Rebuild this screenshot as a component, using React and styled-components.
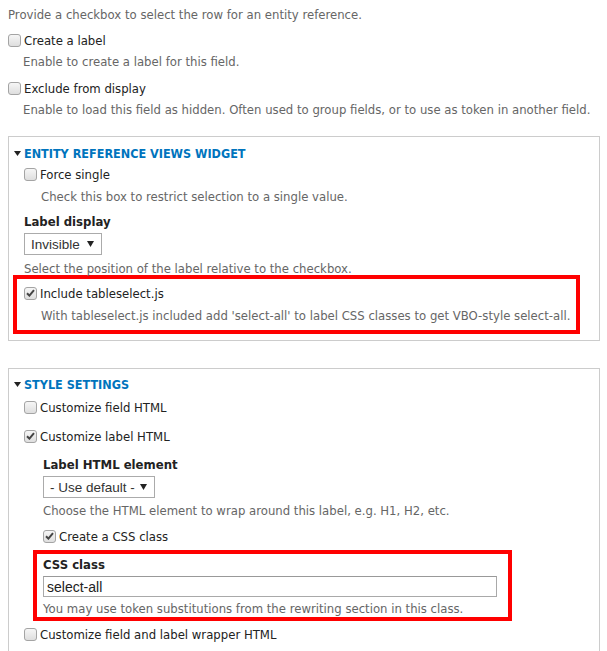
import React from 'react';
import styled, { createGlobalStyle } from 'styled-components';

const GlobalStyle = createGlobalStyle`
  html, body {
    margin: 0;
    padding: 0;
    background: #fff;
  }
  body {
    font-family: "DejaVu Sans", "Noto Sans", sans-serif;
    font-size: 13px;
    color: #222;
  }
`;

const Page = styled.div`
  padding: 7px 7px 0 8px;
`;

const Description = styled.div`
  font-size: 11.7px;
  line-height: ${(p) => p.$lh || 16}px;
  color: #666;
  margin-top: ${(p) => p.$mt || 0}px;
  padding-left: ${(p) => p.$indent || 0}px;
  white-space: nowrap;
`;

const Item = styled.div`
  margin-top: ${(p) => p.$mt || 0}px;
  padding-left: ${(p) => p.$indent || 0}px;
`;

const CheckRow = styled.label`
  display: flex;
  align-items: center;
  gap: 3px;
  height: 20px;
  font-family: "DejaVu Sans Condensed", "DejaVu Sans", sans-serif;
  font-size: 13px;
  color: #222;
  white-space: nowrap;
`;

const Box = styled.span`
  box-sizing: border-box;
  width: 13px;
  height: 13px;
  flex: none;
  border: 1px solid #a4a4a4;
  border-radius: 3px;
  background: linear-gradient(#f6f6f6, #dedede);
  display: flex;
  align-items: center;
  justify-content: center;
`;

const FieldLabel = styled.div`
  font-family: "DejaVu Sans Condensed", "DejaVu Sans", sans-serif;
  font-weight: bold;
  font-size: 13px;
  line-height: 20px;
  color: #222;
  margin-top: ${(p) => p.$mt || 0}px;
`;

const Select = styled.div`
  box-sizing: border-box;
  display: flex;
  align-items: center;
  justify-content: space-between;
  white-space: nowrap;
  height: ${(p) => p.$h || 22}px;
  width: ${(p) => p.$w}px;
  margin-top: ${(p) => p.$mt || 0}px;
  padding: 0 7px 0 6px;
  border: 1px solid #ababab;
  background: #fff;
  font-family: "Liberation Sans", Arial, sans-serif;
  font-size: 13.5px;
  color: #333;
  svg {
    flex: none;
  }
`;

const TextInput = styled.div`
  box-sizing: border-box;
  height: 21px;
  width: 454px;
  margin-top: 1px;
  padding: 0 3px;
  border: 1px solid #a9a9a9;
  border-top-color: #999;
  display: flex;
  align-items: center;
  font-family: "Liberation Sans", Arial, sans-serif;
  font-size: 14px;
  color: #222;
`;

const Fieldset = styled.section`
  box-sizing: border-box;
  width: 592px;
  border: 1px solid #ccc;
  margin-top: ${(p) => p.$mt || 0}px;
  padding: ${(p) => p.$pt || 6}px 0 ${(p) => p.$pb || 6}px 15px;
`;

const Legend = styled.div`
  display: flex;
  align-items: center;
  gap: 3px;
  margin-left: -10px;
  height: 20px;
  font-family: "DejaVu Sans Condensed", "DejaVu Sans", sans-serif;
  font-size: 12.5px;
  font-weight: bold;
  color: #0074bd;
  text-transform: uppercase;
`;

const Highlight = styled.div`
  box-sizing: border-box;
  width: ${(p) => p.$w}px;
  margin-left: -${(p) => p.$pl + 4}px;
  margin-top: ${(p) => p.$mt || 0}px;
  border: 4px solid #f00;
  padding: ${(p) => p.$pt || 0}px 0 ${(p) => p.$pb || 0}px ${(p) => p.$pl}px;
`;

function Checkbox({ checked, label }) {
  return (
    <CheckRow>
      <Box>
        {checked && (
          <svg width="9" height="8" viewBox="0 0 9 8">
            <path d="M1 4.2 L3.4 6.6 L8 1.2" fill="none" stroke="#444" strokeWidth="2" />
          </svg>
        )}
      </Box>
      {label}
    </CheckRow>
  );
}

function Caret() {
  return (
    <svg width="7" height="6" viewBox="0 0 7 6">
      <path d="M0 0 H7 L3.5 6 Z" fill="#222" />
    </svg>
  );
}

function Arrow() {
  return (
    <svg width="7" height="5" viewBox="0 0 7 5">
      <path d="M0 0 H7 L3.5 5 Z" fill="#222" />
    </svg>
  );
}

export default function App() {
  return (
    <>
      <GlobalStyle />
      <Page>
        <Description>Provide a checkbox to select the row for an entity reference.</Description>

        <Item $mt={7}>
          <Checkbox label="Create a label" />
          <Description $mt={4} $indent={15}>Enable to create a label for this field.</Description>
        </Item>

        <Item $mt={8}>
          <Checkbox label="Exclude from display" />
          <Description $mt={4} $indent={15}>
            Enable to load this field as hidden. Often used to group fields, or to use as token in another field.
          </Description>
        </Item>

        <Fieldset $mt={18} $pt={6} $pb={6}>
          <Legend><Arrow />Entity reference views widget</Legend>

          <Item $mt={1}>
            <Checkbox label="Force single" />
            <Description $mt={5} $indent={17}>Check this box to restrict selection to a single value.</Description>
          </Item>

          <FieldLabel $mt={7}>Label display</FieldLabel>
          <Select $w={78} $mt={1}>Invisible<Caret /></Select>
          <Description $mt={6}>Select the position of the label relative to the checkbox.</Description>

          <Highlight $w={567} $pl={7} $pt={4} $pb={6} $mt={-2}>
            <Checkbox checked label="Include tableselect.js" />
            <Description $mt={5} $indent={17}>
              With tableselect.js included add 'select-all' to label CSS classes to get VBO-style select-all.
            </Description>
          </Highlight>
        </Fieldset>

        <Fieldset $mt={27} $pt={5} $pb={0}>
          <Legend><Arrow />Style settings</Legend>

          <Item $mt={3}>
            <Checkbox label="Customize field HTML" />
          </Item>
          <Item $mt={9}>
            <Checkbox checked label="Customize label HTML" />
          </Item>

          <Item $indent={19}>
            <FieldLabel $mt={9}>Label HTML element</FieldLabel>
            <Select $w={112} $h={22} $mt={1}>- Use default -<Caret /></Select>
            <Description $mt={5}>Choose the HTML element to wrap around this label, e.g. H1, H2, etc.</Description>

            <Item $mt={7}>
              <Checkbox checked label="Create a CSS class" />
            </Item>

            <Highlight $w={479} $pl={6} $pt={1} $pb={1} $mt={4}>
              <FieldLabel>CSS class</FieldLabel>
              <TextInput>select-all</TextInput>
              <Description $mt={5} $lh={14}>You may use token substitutions from the rewriting section in this class.</Description>
            </Highlight>
          </Item>

          <Item $mt={3}>
            <Checkbox label="Customize field and label wrapper HTML" />
          </Item>
          <div style={{ height: 20 }} />
        </Fieldset>
      </Page>
    </>
  );
}
